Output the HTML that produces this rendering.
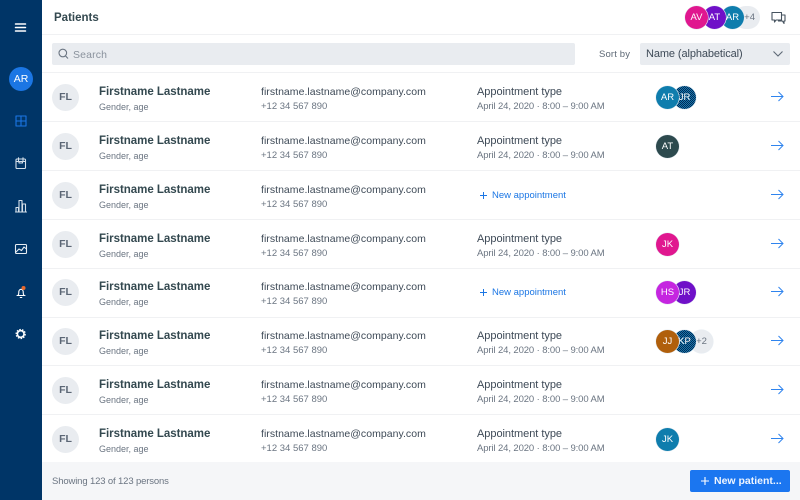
<!DOCTYPE html>
<html><head><meta charset="utf-8"><style>
*{box-sizing:border-box}
html,body{margin:0;padding:0;width:800px;height:500px;overflow:hidden;background:#fff;font-family:"Liberation Sans",sans-serif}
.a{position:absolute;white-space:nowrap}
#side{left:0;top:0;width:42px;height:500px;background:#003567}
.row{position:absolute;left:42px;width:758px;height:49px;border-bottom:1px solid #f0f1f3}
.av{position:absolute;left:10px;top:11px;width:27px;height:27px;border-radius:50%;background:#e9ecf0;color:#5b6675;font-size:10.5px;font-weight:bold;text-align:center;line-height:27px}
.n{position:absolute;left:57px;top:12.6px;font-size:11.5px;font-weight:bold;color:#33484f;white-space:nowrap;letter-spacing:-.03px}
.g{position:absolute;left:57px;top:28.6px;font-size:9px;color:#6b7582;white-space:nowrap}
.e{position:absolute;left:219px;top:13px;font-size:10.5px;color:#3e4a57;white-space:nowrap;letter-spacing:.03px}
.p{position:absolute;left:219px;top:28px;font-size:9.5px;color:#6b7582;white-space:nowrap}
.t{position:absolute;left:435px;top:13px;font-size:11px;color:#3e4a57;white-space:nowrap;letter-spacing:-.04px}
.d{position:absolute;left:435px;top:28px;font-size:9.5px;color:#6b7582;white-space:nowrap;letter-spacing:-.11px}
.na{position:absolute;left:437px;top:18.5px;font-size:9.5px;color:#1b76e4;white-space:nowrap}
.na svg{position:absolute;left:0;top:1px}
.na span{margin-left:13px}
.c{position:absolute;top:12.5px;width:23px;height:23px;border-radius:50%;color:#fff;font-size:9.5px;text-align:center;line-height:23px;box-shadow:0 0 0 .6px #e8eef3}
.dith{background:repeating-conic-gradient(#002a58 0 25%,#1a78aa 0 50%) 0 0/2px 2px}
.ar{position:absolute;left:729px;top:18px}
</style></head><body>
<div id="side" class="a">
<svg width="42" height="500" fill="none" stroke-linecap="round" stroke-linejoin="round" style="position:absolute;left:0;top:0">
<path d="M15.500 24h10M15.500 27.500h10M15.500 31h10" stroke="#fff" stroke-width="1.500"/>
<g stroke="#1b76e4" stroke-width="1.100"><rect x="16" y="116" width="10" height="10"/><path d="M21 116v10M16 121h10"/></g>
<g stroke="#d5e0ea" stroke-width="1.100"><rect x="16" y="159" width="9.500" height="9.500" rx="1"/><path d="M18.500 157.800v3M23 157.800v3M16 161.500h9.500M19 161.500v1.500h3.500v-1.500"/></g>
<g stroke="#d5e0ea" stroke-width="1.100"><path d="M15.500 212h11M16 212v-4.500h2.500v4.500M19 212v-11.500h3v11.500M22.500 212v-8h3v8"/></g>
<g stroke="#e6edf3" stroke-width="1.100"><rect x="15.500" y="244.500" width="11" height="9" rx="1"/><path d="M16 252l3-3 2.500 1.500 2.500-3.500 2.500 2"/></g>
<g stroke="#fff" stroke-width="1.100"><path d="M17 295.500h8M18 295.500c.8-1 .8-2 .8-3.500 0-1.500 1-2.700 2.200-2.700s2.200 1.200 2.200 2.700c0 1.500 0 2.500.8 3.500M20.200 297.500h1.600"/></g>
<circle cx="23.500" cy="288" r="2" fill="#e8692c"/>
<circle cx="20.700" cy="334" r="3.300" stroke="#fff" stroke-width="1.600"/>
<circle cx="20.700" cy="334" r="4.500" stroke="#fff" stroke-width="1.300" stroke-dasharray="1.600 1.200" stroke-linecap="butt"/>
</svg>
<div class="a" style="left:9px;top:67px;width:24px;height:24px;border-radius:50%;background:#1b76e4;color:#fff;font-size:10.500px;text-align:center;line-height:24px">AR</div>
</div>

<div class="a" style="left:54px;top:12px;font-size:11.5px;font-weight:bold;color:#33484f;letter-spacing:0">Patients</div>
<div class="a" style="left:42px;top:34px;width:758px;height:1px;background:#f0f1f3"></div>

<div class="a" style="left:734px;top:6px;width:26px;height:23px;border-radius:12px;background:#e9ecf0;color:#6b7582;font-size:9.500px;line-height:23px;text-align:right;padding-right:5px;">+4</div>
<div class="a" style="left:721px;top:6px;width:23px;height:23px;border-radius:50%;background:#0f7dad;color:#fff;font-size:9.500px;line-height:23px;text-align:center;box-shadow:0 0 0 .6px #e8eef3">AR</div>
<div class="a" style="left:703px;top:6px;width:23px;height:23px;border-radius:50%;background:#6f10c8;color:#fff;font-size:9.500px;line-height:23px;text-align:center;box-shadow:0 0 0 .6px #e8eef3">AT</div>
<div class="a" style="left:685px;top:6px;width:23px;height:23px;border-radius:50%;background:#e0178f;color:#fff;font-size:9.500px;line-height:23px;text-align:center;box-shadow:0 0 0 .6px #e8eef3">AV</div>
<svg class="a" style="left:771px;top:11px" width="15" height="13" fill="none" stroke="#46535f" stroke-width="1.100" stroke-linejoin="round"><path d="M1 1.500h9.500v7.500h-5.500l-1.500 2v-2h-2.500z"/><path d="M10.500 4h3.500v6h-1v2.500l-1.500-2.500h-4.500"/></svg>

<div class="a" style="left:52px;top:43px;width:523px;height:22px;background:#e9ecf0;border-radius:2px"></div>
<svg class="a" style="left:58px;top:48px" width="11" height="12" fill="none" stroke="#6b7582" stroke-width="1.100"><circle cx="4.800" cy="5" r="3.800"/><path d="M7.600 8l2.400 2.500"/></svg>
<div class="a" style="left:73px;top:48.500px;font-size:10.500px;color:#8a929d;letter-spacing:.15px">Search</div>
<div class="a" style="left:599px;top:49px;font-size:9.500px;color:#5d6875;letter-spacing:.15px">Sort by</div>
<div class="a" style="left:640px;top:43px;width:150px;height:22px;background:#e9ecf0;border-radius:2px"></div>
<div class="a" style="left:646px;top:48px;font-size:11px;color:#3e4a57;letter-spacing:-.1px">Name (alphabetical)</div>
<svg class="a" style="left:772px;top:50px" width="12" height="8" fill="none" stroke="#5d6875" stroke-width="1.100"><path d="M1.500 1.500l4.500 4.500 4.500-4.500"/></svg>
<div class="a" style="left:42px;top:72px;width:758px;height:1px;background:#f0f1f3"></div>

<div class="row" style="top:73px"><div class="av">FL</div><div class="n">Firstname Lastname</div><div class="g">Gender, age</div><div class="e">firstname.lastname@company.com</div><div class="p">+12 34 567 890</div><div class="t">Appointment type</div><div class="d">April 24, 2020 · 8:00 – 9:00 AM</div>
<div class="c dith" style="left:631px">JR</div><div class="c" style="left:614px;background:#0f7dad">AR</div>
<svg class="ar" width="13" height="11" fill="none" stroke="#2f84ee" stroke-width="1"><path d="M0 5.500h12M7.500 1l4.500 4.500-4.500 4.500"/></svg></div>

<div class="row" style="top:122px"><div class="av">FL</div><div class="n">Firstname Lastname</div><div class="g">Gender, age</div><div class="e">firstname.lastname@company.com</div><div class="p">+12 34 567 890</div><div class="t">Appointment type</div><div class="d">April 24, 2020 · 8:00 – 9:00 AM</div>
<div class="c" style="left:614px;background:#2d4a4e">AT</div>
<svg class="ar" width="13" height="11" fill="none" stroke="#2f84ee" stroke-width="1"><path d="M0 5.500h12M7.500 1l4.500 4.500-4.500 4.500"/></svg></div>

<div class="row" style="top:171px"><div class="av">FL</div><div class="n">Firstname Lastname</div><div class="g">Gender, age</div><div class="e">firstname.lastname@company.com</div><div class="p">+12 34 567 890</div>
<div class="na"><svg width="9" height="9" fill="none" stroke="#1b76e4" stroke-width="1"><path d="M4.500 1v7M1 4.500h7"/></svg><span>New appointment</span></div>
<svg class="ar" width="13" height="11" fill="none" stroke="#2f84ee" stroke-width="1"><path d="M0 5.500h12M7.500 1l4.500 4.500-4.500 4.500"/></svg></div>

<div class="row" style="top:220px"><div class="av">FL</div><div class="n">Firstname Lastname</div><div class="g">Gender, age</div><div class="e">firstname.lastname@company.com</div><div class="p">+12 34 567 890</div><div class="t">Appointment type</div><div class="d">April 24, 2020 · 8:00 – 9:00 AM</div>
<div class="c" style="left:614px;background:#e0178f">JK</div>
<svg class="ar" width="13" height="11" fill="none" stroke="#2f84ee" stroke-width="1"><path d="M0 5.500h12M7.500 1l4.500 4.500-4.500 4.500"/></svg></div>

<div class="row" style="top:268px;height:50px"><div class="av">FL</div><div class="n">Firstname Lastname</div><div class="g">Gender, age</div><div class="e">firstname.lastname@company.com</div><div class="p">+12 34 567 890</div>
<div class="na"><svg width="9" height="9" fill="none" stroke="#1b76e4" stroke-width="1"><path d="M4.500 1v7M1 4.500h7"/></svg><span>New appointment</span></div>
<div class="c" style="left:631px;background:#6f10c8">JR</div><div class="c" style="left:614px;background:#c526e0">HS</div>
<svg class="ar" width="13" height="11" fill="none" stroke="#2f84ee" stroke-width="1"><path d="M0 5.500h12M7.500 1l4.500 4.500-4.500 4.500"/></svg></div>

<div class="row" style="top:317px"><div class="av">FL</div><div class="n">Firstname Lastname</div><div class="g">Gender, age</div><div class="e">firstname.lastname@company.com</div><div class="p">+12 34 567 890</div><div class="t">Appointment type</div><div class="d">April 24, 2020 · 8:00 – 9:00 AM</div>
<div class="c" style="left:648px;background:#e9ecf0;color:#6b7582">+2</div><div class="c dith" style="left:631px">KP</div><div class="c" style="left:614px;background:#b05f0c">JJ</div>
<svg class="ar" width="13" height="11" fill="none" stroke="#2f84ee" stroke-width="1"><path d="M0 5.500h12M7.500 1l4.500 4.500-4.500 4.500"/></svg></div>

<div class="row" style="top:366px"><div class="av">FL</div><div class="n">Firstname Lastname</div><div class="g">Gender, age</div><div class="e">firstname.lastname@company.com</div><div class="p">+12 34 567 890</div><div class="t">Appointment type</div><div class="d">April 24, 2020 · 8:00 – 9:00 AM</div>
<svg class="ar" width="13" height="11" fill="none" stroke="#2f84ee" stroke-width="1"><path d="M0 5.500h12M7.500 1l4.500 4.500-4.500 4.500"/></svg></div>

<div class="row" style="top:415px;border-bottom:0"><div class="av">FL</div><div class="n">Firstname Lastname</div><div class="g">Gender, age</div><div class="e">firstname.lastname@company.com</div><div class="p">+12 34 567 890</div><div class="t">Appointment type</div><div class="d">April 24, 2020 · 8:00 – 9:00 AM</div>
<div class="c" style="left:614px;background:#0f7dad">JK</div>
<svg class="ar" width="13" height="11" fill="none" stroke="#2f84ee" stroke-width="1"><path d="M0 5.500h12M7.500 1l4.500 4.500-4.500 4.500"/></svg></div>

<div class="a" style="left:42px;top:462px;width:758px;height:38px;background:#f5f6f8"></div>
<div class="a" style="left:52px;top:476px;font-size:9.500px;color:#6b7582;letter-spacing:-.14px">Showing 123 of 123 persons</div>
<div class="a" style="left:690px;top:470px;width:100px;height:22px;background:#1b76f0;border-radius:2px"></div>
<svg class="a" style="left:700px;top:476px" width="10" height="10" fill="none" stroke="#fff" stroke-width="1.100"><path d="M5 1v8M1 5h8"/></svg>
<div class="a" style="left:714px;top:475px;font-size:10.500px;font-weight:bold;color:#eef5ff;letter-spacing:0">New patient...</div>
</body></html>
